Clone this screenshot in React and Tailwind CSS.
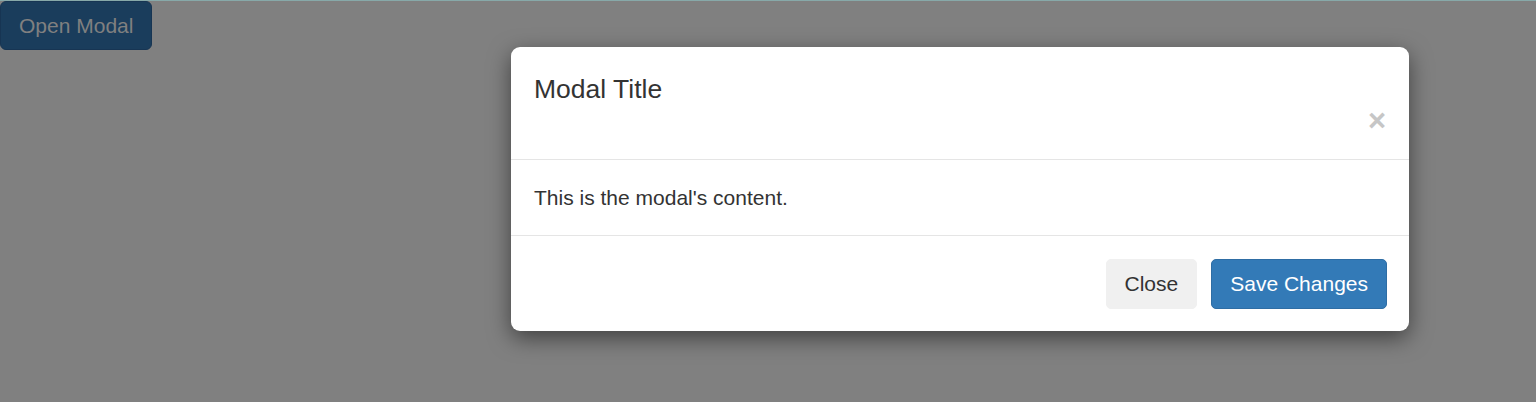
import React from "react";

export default function App() {
  return (
    <div
      className="relative h-[402px] w-full overflow-hidden bg-[#808080] text-[21px] text-[#333333]"
      style={{ fontFamily: '"Liberation Sans", Arial, sans-serif' }}
    >
      <div className="h-px w-full bg-[#87a9a9]" />
      <button className="h-[49px] rounded-[6px] border border-[#173553] bg-[#1a3d5c] px-[18px] leading-none text-[#808080]">
        Open Modal
      </button>

      <div className="absolute inset-0 flex items-start pl-[511px] pt-[47px]">
        <div className="w-[898px] rounded-[9px] bg-white shadow-[0_7px_22px_rgba(0,0,0,0.5)]">
          <div className="border-b border-[#e5e5e5] px-[23px] pt-[23px] pb-[22px]">
            <h4 className="text-[26.5px] leading-[39px] text-[#333333]">Modal Title</h4>
            <div className="flex h-[28px] justify-end">
              <button className="-mt-[5px] text-[31px] font-bold leading-none text-[#c6c6c6]">
                ×
              </button>
            </div>
          </div>
          <div className="border-b border-[#e5e5e5] px-[23px] pt-[23px] pb-[22px] leading-[30px]">
            This is the modal's content.
          </div>
          <div className="flex justify-end gap-[14px] px-[22px] pt-[23px] pb-[22px]">
            <button className="h-[50px] rounded-[5px] border border-[#f0f0f0] bg-[#f0f0f0] px-[18px] text-[#333333]">
              Close
            </button>
            <button className="h-[50px] rounded-[5px] border border-[#2e6da4] bg-[#337ab7] px-[18px] text-white">
              Save Changes
            </button>
          </div>
        </div>
      </div>
    </div>
  );
}
